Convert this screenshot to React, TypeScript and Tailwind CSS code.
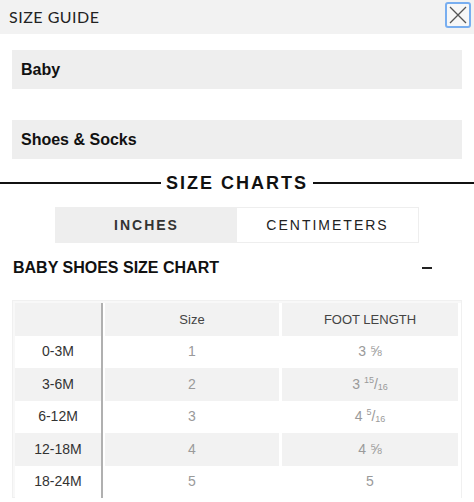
import React from 'react';

const rows: { age: string; size: string; foot: React.ReactNode }[] = [
  { age: '0-3M', size: '1', foot: <>3{'\u00a0'}⅝</> },
  { age: '3-6M', size: '2', foot: <>3{'\u00a0'}<sup className="text-[9px]">15</sup>/<sub className="text-[9px]">16</sub></> },
  { age: '6-12M', size: '3', foot: <>4{'\u00a0'}<sup className="text-[9px]">5</sup>/<sub className="text-[9px]">16</sub></> },
  { age: '12-18M', size: '4', foot: <>4{'\u00a0'}⅝</> },
  { age: '18-24M', size: '5', foot: <>5</> },
];

function CategoryBar({ label }: { label: string }) {
  return (
    <div className="mx-[12px] w-[450px] h-[39px] bg-[#eeeeee] flex items-center px-[9px]">
      <span className="text-[16px] font-bold text-[#111]">{label}</span>
    </div>
  );
}

export default function App() {
  return (
    <div className="w-[474px] h-[502px] bg-white overflow-hidden" style={{ fontFamily: '"Liberation Sans", Arial, sans-serif' }}>
      <header className="h-[34px] bg-[#f2f2f2] flex items-center justify-between pl-[9px] pr-[3px]">
        <h1 className="text-[16px] tracking-[0.5px] text-[#222]" style={{ fontFamily: 'Lato, sans-serif' }}>SIZE GUIDE</h1>
        <button className="w-[26px] h-[26px] mb-[4px] rounded-[3px] border-2 border-[#78aef0] bg-[#f7f7f7] flex items-center justify-center" aria-label="Close">
          <svg width="20" height="20" viewBox="0 0 20 20">
            <path d="M2 2 L18 18 M18 2 L2 18" stroke="#555" strokeWidth="1.3" fill="none" />
          </svg>
        </button>
      </header>

      <div className="mt-[16px]">
        <CategoryBar label="Baby" />
      </div>
      <div className="mt-[31px]">
        <CategoryBar label="Shoes & Socks" />
      </div>

      <div className="mt-[11px] flex items-center h-[26px]">
        <div className="flex-1 h-[2px] bg-[#111]" />
        <h2 className="px-[5px] text-[18px] leading-[26px] font-bold tracking-[2px] text-[#111]">SIZE CHARTS</h2>
        <div className="flex-1 h-[2px] bg-[#111]" />
      </div>

      <div className="mt-[11px] ml-[55px] w-[364px] h-[36px] flex border border-[#eeeeee]">
        <button className="w-[181px] bg-[#eeeeee] text-[14px] font-bold tracking-[2px] text-[#333]">INCHES</button>
        <button className="flex-1 bg-white text-[14px] tracking-[2px] text-[#222]">CENTIMETERS</button>
      </div>

      <div className="mt-[14px] h-[22px] flex items-center justify-between pl-[13px] pr-[42px]">
        <h3 className="text-[16px] leading-[22px] font-bold text-[#111]">BABY SHOES SIZE CHART</h3>
        <span className="w-[10px] h-[2px] bg-[#222]" />
      </div>

      <div className="mt-[21px] ml-[12px] w-[450px] h-[198px] bg-[#f8f8f8] border border-[#f0f0f0] pt-[2px] pl-[2px]">
        {[{ age: '', size: 'Size', foot: 'FOOT LENGTH' as React.ReactNode }, ...rows].map((r, i) => {
          const head = i === 0;
          const cell = i % 2 === 0 ? 'bg-[#f2f2f2]' : 'bg-white';
          const val = head ? 'text-[#444] text-[13px]' : 'text-[#9a9a9a]';
          return (
            <div key={i} className="flex h-[32.5px] bg-white text-[14px]">
              <div className={`w-[86px] flex items-center justify-center text-[#333] ${cell}`}>{r.age}</div>
              <div className="w-[2px] bg-[#b0b0b0]" />
              <div className={`ml-[2px] w-[174px] flex items-center justify-center ${val} ${cell}`}>{r.size}</div>
              <div className={`ml-[3px] w-[176px] flex items-center justify-center ${val} ${cell}`}>{r.foot}</div>
            </div>
          );
        })}
      </div>
    </div>
  );
}
